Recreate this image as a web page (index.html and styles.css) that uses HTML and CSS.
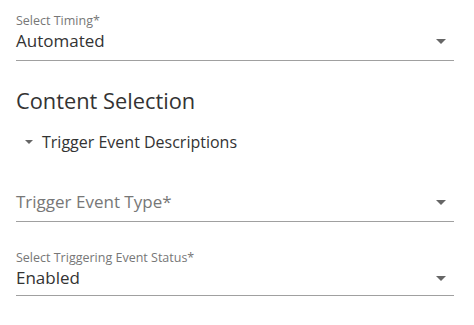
FILE: index.html
```html
<!DOCTYPE html>
<html lang="en">
<head>
    <meta charset="UTF-8">
    <meta name="viewport" content="width=device-width, initial-scale=1.0">
    <title>Trigger Settings</title>
    <link rel="stylesheet" href="styles.css">
</head>
<body>

    <div class="settings-panel">
        <!-- Timing -->
        <div class="select-field">
            <span class="field-label">Select Timing*</span>
            <div class="field-value">
                <span>Automated</span>
                <span class="caret"></span>
            </div>
        </div>

        <h2 class="section-title">Content Selection</h2>

        <div class="collapse-toggle">
            <span class="caret small"></span>
            <span>Trigger Event Descriptions</span>
        </div>

        <!-- Event type (empty) -->
        <div class="select-field empty">
            <div class="field-value placeholder">
                <span>Trigger Event Type*</span>
                <span class="caret"></span>
            </div>
        </div>

        <!-- Status -->
        <div class="select-field status">
            <span class="field-label">Select Triggering Event Status*</span>
            <div class="field-value">
                <span>Enabled</span>
                <span class="caret"></span>
            </div>
        </div>
    </div>

</body>
</html>
```

FILE: styles.css
```css
body {
    margin: 0;
    background: #fff;
    font-family: "Open Sans", Arial, sans-serif;
    color: #333;
}
.settings-panel {
    padding: 12px 20px 0 16px;
}
.select-field {
    border-bottom: 1px solid #a0a0a0;
    padding-bottom: 7px;
}
.field-label {
    display: block;
    font-size: 12.5px;
    line-height: 17px;
    color: #777;
}
.field-value {
    display: flex;
    justify-content: space-between;
    align-items: center;
    font-size: 17px;
    line-height: 24px;
    color: #333;
}
.field-value.placeholder {
    color: #777;
}
.caret {
    width: 0;
    height: 0;
    border-left: 5px solid transparent;
    border-right: 5px solid transparent;
    border-top: 5px solid #666;
    margin-right: 8px;
}
.caret.small {
    border-left-width: 4.5px;
    border-right-width: 4.5px;
    border-top-width: 4.5px;
    margin: 0 9px 0 9px;
}
.section-title {
    font-size: 21.8px;
    font-weight: 400;
    line-height: 28px;
    margin: 26px 0 0 0;
    color: #333;
}
.collapse-toggle {
    display: flex;
    align-items: center;
    font-size: 16px;
    line-height: 22px;
    margin-top: 16px;
    color: #333;
}
.select-field.empty {
    margin-top: 37px;
}
.select-field.status {
    margin-top: 27px;
    padding-bottom: 5px;
}
```
